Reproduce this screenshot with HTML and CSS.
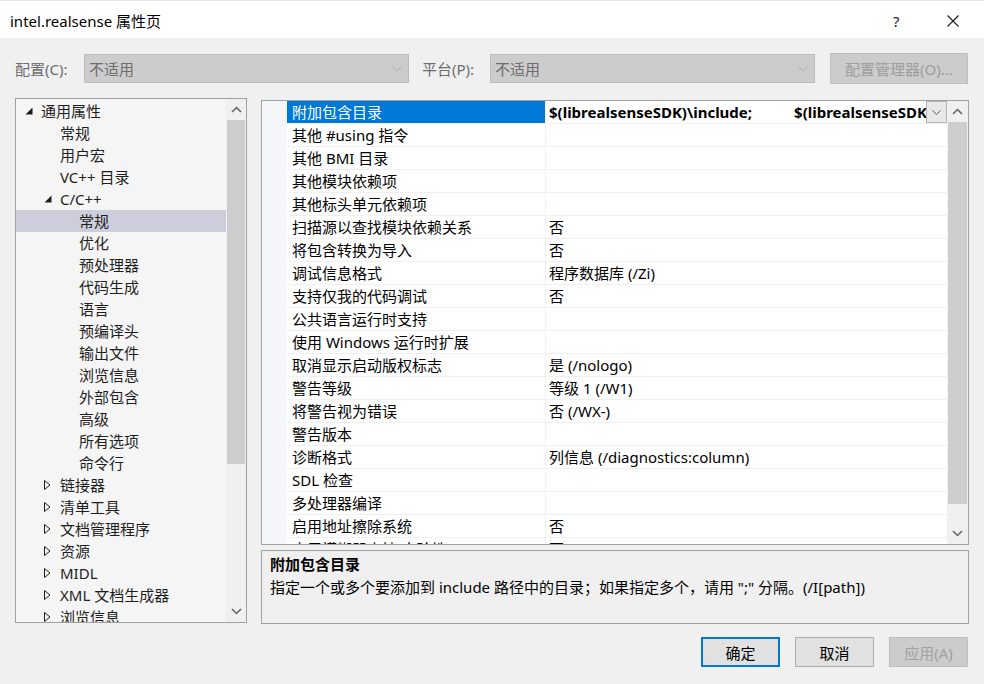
FILE: index.html
```html
<!DOCTYPE html>
<html lang="zh-CN">
<head>
<meta charset="utf-8">
<title>intel.realsense 属性页</title>
<link rel="stylesheet" href="styles.css">
</head>
<body>
<div class="titlebar">
  <span class="title">intel.realsense 属性页</span>
  <div class="tb-btns">
    <span class="help">?</span>
    <svg class="close" width="12" height="12" viewBox="0 0 12 12"><path d="M0.5 0.5 L11.5 11.5 M11.5 0.5 L0.5 11.5" stroke="#1a1a1a" stroke-width="1.1" fill="none"/></svg>
  </div>
</div>

<div class="config">
  <span class="cfg-label">配置(C):</span>
  <div class="combo"><span>不适用</span><svg width="10" height="6" viewBox="0 0 10 6"><path d="M0.5 0.5 L5 5 L9.5 0.5" stroke="#a8a8a8" fill="none"/></svg></div>
  <span class="cfg-label plat">平台(P):</span>
  <div class="combo"><span>不适用</span><svg width="10" height="6" viewBox="0 0 10 6"><path d="M0.5 0.5 L5 5 L9.5 0.5" stroke="#a8a8a8" fill="none"/></svg></div>
  <div class="cfg-btn">配置管理器(O)...</div>
</div>

<div class="main">
  <div class="tree">
    <div class="tree-rows">
      <div class="trow l0"><span class="arr"><svg width="8" height="8" viewBox="0 0 8 8"><path d="M7.5 0.5 L7.5 7.5 L0.5 7.5 Z" fill="#1e1e1e"/></svg></span>通用属性</div>
      <div class="trow l1"><span class="arr"></span>常规</div>
      <div class="trow l1"><span class="arr"></span>用户宏</div>
      <div class="trow l1"><span class="arr"></span>VC++ 目录</div>
      <div class="trow l1"><span class="arr"><svg width="8" height="8" viewBox="0 0 8 8"><path d="M7.5 0.5 L7.5 7.5 L0.5 7.5 Z" fill="#1e1e1e"/></svg></span>C/C++</div>
      <div class="trow l2 sel"><span class="arr"></span>常规</div>
      <div class="trow l2"><span class="arr"></span>优化</div>
      <div class="trow l2"><span class="arr"></span>预处理器</div>
      <div class="trow l2"><span class="arr"></span>代码生成</div>
      <div class="trow l2"><span class="arr"></span>语言</div>
      <div class="trow l2"><span class="arr"></span>预编译头</div>
      <div class="trow l2"><span class="arr"></span>输出文件</div>
      <div class="trow l2"><span class="arr"></span>浏览信息</div>
      <div class="trow l2"><span class="arr"></span>外部包含</div>
      <div class="trow l2"><span class="arr"></span>高级</div>
      <div class="trow l2"><span class="arr"></span>所有选项</div>
      <div class="trow l2"><span class="arr"></span>命令行</div>
      <div class="trow l1"><span class="arr"><svg width="7" height="10" viewBox="0 0 7 10"><path d="M0.5 0.5 L6 5 L0.5 9.5 Z" fill="none" stroke="#1e1e1e"/></svg></span>链接器</div>
      <div class="trow l1"><span class="arr"><svg width="7" height="10" viewBox="0 0 7 10"><path d="M0.5 0.5 L6 5 L0.5 9.5 Z" fill="none" stroke="#1e1e1e"/></svg></span>清单工具</div>
      <div class="trow l1"><span class="arr"><svg width="7" height="10" viewBox="0 0 7 10"><path d="M0.5 0.5 L6 5 L0.5 9.5 Z" fill="none" stroke="#1e1e1e"/></svg></span>文档管理程序</div>
      <div class="trow l1"><span class="arr"><svg width="7" height="10" viewBox="0 0 7 10"><path d="M0.5 0.5 L6 5 L0.5 9.5 Z" fill="none" stroke="#1e1e1e"/></svg></span>资源</div>
      <div class="trow l1"><span class="arr"><svg width="7" height="10" viewBox="0 0 7 10"><path d="M0.5 0.5 L6 5 L0.5 9.5 Z" fill="none" stroke="#1e1e1e"/></svg></span>MIDL</div>
      <div class="trow l1"><span class="arr"><svg width="7" height="10" viewBox="0 0 7 10"><path d="M0.5 0.5 L6 5 L0.5 9.5 Z" fill="none" stroke="#1e1e1e"/></svg></span>XML 文档生成器</div>
      <div class="trow l1"><span class="arr"><svg width="7" height="10" viewBox="0 0 7 10"><path d="M0.5 0.5 L6 5 L0.5 9.5 Z" fill="none" stroke="#1e1e1e"/></svg></span>浏览信息</div>
    </div>
    <div class="vscroll tree-scroll">
      <div class="sbtn"><svg width="11" height="7" viewBox="0 0 11 7"><path d="M1 6 L5.5 1.5 L10 6" stroke="#606060" stroke-width="1.5" fill="none"/></svg></div>
      <div class="track"><div class="thumb tthumb"></div></div>
      <div class="sbtn"><svg width="11" height="7" viewBox="0 0 11 7"><path d="M1 1 L5.5 5.5 L10 1" stroke="#606060" stroke-width="1.5" fill="none"/></svg></div>
    </div>
  </div>

  <div class="right">
    <div class="grid">
      <div class="gutter"></div>
      <div class="prows">
        <div class="prow sel"><div class="pname">附加包含目录</div><div class="pval bold"><span class="vtext">$(librealsenseSDK)\include;<span class="v2">$(librealsenseSDK)\third-party\glfw-imgui\include;</span></span><span class="dd"><svg width="9" height="5" viewBox="0 0 9 5"><path d="M0.5 0.5 L4.5 4.5 L8.5 0.5" stroke="#606060" fill="none"/></svg></span></div></div>
        <div class="prow"><div class="pname">其他 #using 指令</div><div class="pval"></div></div>
        <div class="prow"><div class="pname">其他 BMI 目录</div><div class="pval"></div></div>
        <div class="prow"><div class="pname">其他模块依赖项</div><div class="pval"></div></div>
        <div class="prow"><div class="pname">其他标头单元依赖项</div><div class="pval"></div></div>
        <div class="prow"><div class="pname">扫描源以查找模块依赖关系</div><div class="pval">否</div></div>
        <div class="prow"><div class="pname">将包含转换为导入</div><div class="pval">否</div></div>
        <div class="prow"><div class="pname">调试信息格式</div><div class="pval">程序数据库 (/Zi)</div></div>
        <div class="prow"><div class="pname">支持仅我的代码调试</div><div class="pval">否</div></div>
        <div class="prow"><div class="pname">公共语言运行时支持</div><div class="pval"></div></div>
        <div class="prow"><div class="pname">使用 Windows 运行时扩展</div><div class="pval"></div></div>
        <div class="prow"><div class="pname">取消显示启动版权标志</div><div class="pval">是 (/nologo)</div></div>
        <div class="prow"><div class="pname">警告等级</div><div class="pval">等级 1 (/W1)</div></div>
        <div class="prow"><div class="pname">将警告视为错误</div><div class="pval">否 (/WX-)</div></div>
        <div class="prow"><div class="pname">警告版本</div><div class="pval"></div></div>
        <div class="prow"><div class="pname">诊断格式</div><div class="pval">列信息 (/diagnostics:column)</div></div>
        <div class="prow"><div class="pname">SDL 检查</div><div class="pval"></div></div>
        <div class="prow"><div class="pname">多处理器编译</div><div class="pval"></div></div>
        <div class="prow"><div class="pname">启用地址擦除系统</div><div class="pval">否</div></div>
        <div class="prow"><div class="pname">启用模糊器支持(实验性)</div><div class="pval">否</div></div>
      </div>
      <div class="vscroll grid-scroll">
        <div class="sbtn"><svg width="11" height="7" viewBox="0 0 11 7"><path d="M1 6 L5.5 1.5 L10 6" stroke="#606060" stroke-width="1.5" fill="none"/></svg></div>
        <div class="track"><div class="thumb gthumb"></div></div>
        <div class="sbtn"><svg width="11" height="7" viewBox="0 0 11 7"><path d="M1 1 L5.5 5.5 L10 1" stroke="#606060" stroke-width="1.5" fill="none"/></svg></div>
      </div>
    </div>
    <div class="desc">
      <div class="desc-title">附加包含目录</div>
      <div class="desc-text">指定一个或多个要添加到 include 路径中的目录；如果指定多个，请用 ";" 分隔。(/I[path])</div>
    </div>
  </div>
</div>

<div class="footer">
  <div class="btn default">确定</div>
  <div class="btn">取消</div>
  <div class="btn disabled">应用(A)</div>
</div>
</body>
</html>
```

FILE: styles.css
```css
* { box-sizing: border-box; }

body {
  margin: 0;
  width: 984px;
  height: 684px;
  overflow: hidden;
  background: #f0f0f0;
  font-family: "Noto Sans", "Noto Sans CJK SC", sans-serif;
  font-size: 15px;
  color: #1a1a1a;
}

.titlebar {
  height: 38px;
  background: #ffffff;
  display: flex;
  align-items: center;
  padding-left: 10px;
  padding-top: 2px;
  border-top: 1px solid #e4e4e4;
}
.title { color: #000; line-height: 20px; }
.tb-btns {
  margin-left: auto;
  display: flex;
  align-items: center;
  padding-right: 25px;
}
.help { width: 10px; margin-right: 44px; color: #1a1a1a; line-height: 20px; }
.close { display: block; }

.config {
  display: flex;
  align-items: center;
  height: 31px;
  margin-top: 15px;
  padding-left: 15px;
}
.cfg-label { width: 69px; color: #6d6d6d; white-space: nowrap; }
.cfg-label.plat { width: 68px; margin-left: 13px; }
.combo {
  width: 325px;
  height: 29px;
  background: #cccccc;
  border: 1px solid #bcbcbc;
  color: #6d6d6d;
  display: flex;
  align-items: center;
  justify-content: space-between;
  padding: 0 6px 0 4px;
}
.combo svg { display: block; }
.cfg-btn {
  margin-left: 15px;
  width: 138px;
  height: 31px;
  background: #cccccc;
  border: 1px solid #bfbfbf;
  color: #9d9d9d;
  display: flex;
  align-items: center;
  justify-content: center;
}

.main {
  display: flex;
  gap: 14px;
  padding-left: 15px;
  margin-top: 14px;
  height: 526px;
}

.tree {
  width: 232px;
  height: 525px;
  border: 1px solid #a0a0a0;
  background: #f5f5f5;
  display: flex;
  overflow: hidden;
}
.tree-rows { flex: 1; padding-top: 1px; overflow: hidden; }
.trow {
  height: 22px;
  line-height: 22px;
  display: flex;
  align-items: center;
  white-space: nowrap;
  color: #1e1e1e;
}
.trow.l0 { padding-left: 9px; }
.trow.l1 { padding-left: 28px; }
.trow.l2 { padding-left: 47px; }
.trow.sel { background: #cccedb; }
.arr { width: 16px; height: 22px; display: flex; align-items: center; }
.arr svg { display: block; }

.vscroll {
  display: flex;
  flex-direction: column;
  background: #f0f0f0;
}
.tree-scroll { width: 20px; }
.grid-scroll { width: 21px; }
.sbtn {
  height: 21px;
  display: flex;
  align-items: center;
  justify-content: center;
}
.sbtn svg { display: block; }
.track { flex: 1; padding: 0 1px; }
.thumb { background: #cdcdcd; }
.tthumb { height: 344px; margin-top: 0; }
.gthumb { height: 382px; margin-top: 0; }

.right {
  width: 708px;
  display: flex;
  flex-direction: column;
}
.grid {
  margin-top: 2px;
  height: 447px;
  border: 1px solid #a0a0a0;
  background: #ffffff;
  display: flex;
  overflow: hidden;
}
.gutter { width: 25px; background: #f4f6f9; }
.prows { width: 660px; overflow: hidden; }
.prow {
  display: flex;
  height: 23px;
  border-bottom: 1px solid #f0f0f0;
  color: #000;
}
.pname {
  width: 259px;
  height: 22px;
  line-height: 22px;
  padding-left: 5px;
  border-right: 1px solid #f0f0f0;
  white-space: nowrap;
  overflow: hidden;
}
.prow.sel .pname { background: #0078d7; color: #ffffff; }
.pval {
  flex: 1;
  height: 22px;
  line-height: 22px;
  padding-left: 3px;
  white-space: nowrap;
  overflow: hidden;
  display: flex;
}
.pval.bold { font-weight: bold; }
.vtext { flex: 1; overflow: hidden; white-space: nowrap; }
.v2 { margin-left: 42px; }
.dd {
  width: 21px;
  height: 22px;
  flex: none;
  background: #e8e8e8;
  border: 1px solid #b4b4b4;
  display: flex;
  align-items: center;
  justify-content: center;
}
.dd svg { display: block; }

.desc {
  margin-top: 5px;
  height: 74px;
  border: 1px solid #a0a0a0;
  background: #f0f0f0;
  padding: 2px 8px;
  line-height: 23px;
  color: #000;
}
.desc-title { font-weight: bold; }

.footer {
  display: flex;
  justify-content: flex-end;
  gap: 15px;
  padding-right: 16px;
  margin-top: 13px;
}
.btn {
  width: 79px;
  height: 30px;
  background: #e1e1e1;
  border: 1px solid #adadad;
  display: flex;
  align-items: center;
  justify-content: center;
  color: #000;
}
.btn.default { border: 2px solid #0078d7; }
.btn.disabled { background: #cccccc; border-color: #bfbfbf; color: #a0a0a0; }
```
